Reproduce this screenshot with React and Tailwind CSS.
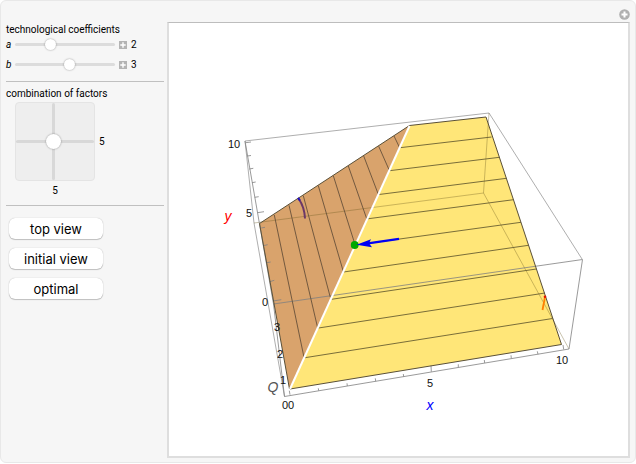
import { useState } from 'react';

const THUMB =
  '[&::-webkit-slider-thumb]:appearance-none [&::-webkit-slider-thumb]:rounded-full [&::-webkit-slider-thumb]:bg-white [&::-webkit-slider-thumb]:shadow-[0_0_2px_rgba(0,0,0,0.4)]';

// [x1, y1, x2, y2]
const BACK_EDGES = [
  [245, 141, 489, 113],
  [489, 113, 582, 259],
  [245, 141, 254, 223],
  [254, 223, 284.5, 396.5],
  [254, 223, 483.5, 193],
  [489, 113, 483.5, 193],
  [483.5, 193, 569, 349],
];

const FRONT_EDGES = [
  [245, 141, 273.5, 304],
  [273.5, 304, 582.5, 259.5],
  [582.5, 259.5, 569, 349],
  [273.5, 304, 284.5, 396.5],
  [284.5, 396.5, 569, 349],
];

const BROWN_LEVELS = [
  [394, 136, 399.3, 147],
  [378.7, 146.3, 389.3, 170.3],
  [363.7, 156, 378.3, 194.3],
  [348.3, 166, 366.7, 218.7],
  [333.3, 175.7, 354.7, 243.5],
  [318.3, 185.7, 343.3, 271.5],
  [303.3, 195.7, 330.3, 297.3],
  [289, 205.3, 317.7, 328],
  [274.3, 215, 304, 357.3],
];

const YELLOW_LEVELS = [
  [400, 147.7, 491.5, 137],
  [389.5, 170.7, 499.5, 157.3],
  [379, 194.5, 506.5, 178.3],
  [367.7, 218.8, 513.5, 199.7],
  [356, 245, 521, 222.3],
  [343.5, 272, 528.5, 245.3],
  [331.5, 299.3, 536.3, 269],
  [318.5, 328, 545, 293],
  [305, 357.7, 552.5, 318.5],
];

const TICKS = [
  [245.7, 142.7, 251, 142],
  [247.3, 156, 251, 155.5],
  [249.3, 169, 253.3, 168.3],
  [252, 182.7, 255.7, 182],
  [254.7, 197.3, 258.7, 196.7],
  [257.5, 212.7, 264, 211.7],
  [261.3, 228, 265, 227.3],
  [264, 245.5, 267.7, 244.7],
  [266.7, 262.7, 270.7, 262],
  [269.7, 281.7, 274.3, 280.3],
  [273, 301, 281.3, 299.7],
  [290, 394.7, 289.3, 390.7],
  [318.7, 390.7, 318.3, 388.3],
  [347.3, 386, 347, 383.3],
  [375.7, 381.3, 375.3, 378.3],
  [403.7, 376.7, 403.3, 374],
  [431.3, 371.7, 431, 365.7],
  [458.3, 367.3, 458.3, 364.3],
  [484.7, 363, 484.3, 360],
  [511.3, 358.3, 511, 355.3],
  [538, 354.3, 537.3, 351.3],
  [563.7, 349.3, 563, 345],
];

function Lines({ data, ...props }) {
  return (
    <g {...props}>
      {data.map(([x1, y1, x2, y2]) => (
        <line key={`${x1}-${y1}-${x2}`} x1={x1} y1={y1} x2={x2} y2={y2} />
      ))}
    </g>
  );
}

function SurfacePlot() {
  return (
    <svg viewBox="169 23 459 433" className="block h-auto w-full" role="img" aria-label="production surface">
      {/* surfaces */}
      <polygon points="259.5,223.5 409.5,125.5 289.5,389" fill="#d9a36c" />
      <polygon points="409.5,125.5 486,117 561.5,344.5 290,389" fill="#ffe678" />

      {/* box edges, the far ones shine through the surface */}
      <g strokeWidth="0.8" fill="none">
        <Lines data={BACK_EDGES.slice(0, 4)} stroke="#999" />
        <Lines data={BACK_EDGES.slice(4)} stroke="#6b5a20" strokeOpacity="0.45" />
        <Lines data={FRONT_EDGES} stroke="#808080" />
        <Lines data={TICKS} stroke="#808080" />
      </g>

      {/* level lines */}
      <Lines data={BROWN_LEVELS} stroke="#66503a" strokeWidth="0.9" />
      <Lines data={YELLOW_LEVELS} stroke="#6a6032" strokeWidth="0.9" />
      <g fill="none" stroke="#5a5038" strokeWidth="1">
        <polyline points="289.5,389 259.5,223.5 409.5,125.5" />
        <polyline points="409.5,125.5 486,117 561.5,344.5 290,389" />
      </g>
      <line x1="409.5" y1="126" x2="290" y2="389" stroke="#fff" strokeWidth="2" />

      {/* expansion marks */}
      <path d="M298.5 198.5Q304.5 207 305 218.5" fill="none" stroke="#6b3868" strokeWidth="2" />
      <path d="M298 197.8L300 200.5" stroke="#2010c0" strokeWidth="2" />
      <line x1="545" y1="297" x2="542.5" y2="310" stroke="#ff8000" strokeWidth="1.8" />
      <circle cx="545" cy="296.7" r="1.3" fill="#e01000" />

      {/* chosen point */}
      <circle cx="354.7" cy="245" r="3.9" fill="#00a800" />
      <line x1="399" y1="238.8" x2="368" y2="243.3" stroke="#0000f5" strokeWidth="2.2" />
      <polygon points="356.5,244.8 371,239.3 369,243.3 372,247.2" fill="#0000f5" />

      <g className="font-['Liberation_Sans',sans-serif] text-[11px]" fill="#111" textAnchor="middle">
        <text x="234" y="148">10</text>
        <text x="249" y="217">5</text>
        <text x="265" y="306">0</text>
        <text x="277" y="331">3</text>
        <text x="280" y="358">2</text>
        <text x="283" y="384">1</text>
        <text x="288" y="409">00</text>
        <text x="430" y="387">5</text>
        <text x="562" y="364">10</text>
      </g>
      <g className="font-['Liberation_Sans',sans-serif] text-[14px]" textAnchor="middle">
        <text x="228" y="221" fill="#f00" fontStyle="italic">y</text>
        <text x="430" y="410" fill="#00f" fontStyle="italic">x</text>
        <text x="273" y="392" fill="#555" fontStyle="italic">Q</text>
      </g>
    </svg>
  );
}

function CoefficientSlider({ id, value, onChange }) {
  return (
    <div className="flex h-[18px] items-center">
      <label htmlFor={id} className="w-[9px] italic">{id}</label>
      <input
        id={id}
        type="range"
        min="0.4"
        max="5.1"
        step="0.1"
        value={value}
        onChange={(e) => onChange(Number(e.target.value))}
        className={`h-3 w-[100px] appearance-none bg-transparent [&::-webkit-slider-runnable-track]:h-[3px] [&::-webkit-slider-runnable-track]:rounded-full [&::-webkit-slider-runnable-track]:bg-[#dcdcdc] [&::-webkit-slider-thumb]:-mt-1 [&::-webkit-slider-thumb]:size-[11px] ${THUMB}`}
      />
      <button type="button" aria-label={`more controls for ${id}`} className="mt-0.5 ml-1 size-2 bg-[#b4b4b4]">
        <svg viewBox="0 0 8 8" className="size-2" stroke="#fff" strokeWidth="1.4">
          <path d="M4 1.3V6.7M1.3 4H6.7" />
        </svg>
      </button>
      <output htmlFor={id} className="ml-1">{value}</output>
    </div>
  );
}

function FactorPad({ x, y, onX, onY }) {
  return (
    <div className="ml-[9px] grid w-max grid-cols-[80px_auto] items-center gap-x-1 gap-y-1">
      <div className="grid h-[79px] items-center rounded border border-[#e4e4e4] bg-[#eee]">
        <input
          type="range"
          aria-label="second factor"
          min="0"
          max="10"
          value={y}
          onChange={(e) => onY(Number(e.target.value))}
          className="ml-[30px] h-[77px] w-[15px] appearance-none bg-transparent [direction:rtl] [grid-area:1/1] [writing-mode:vertical-lr] [&::-webkit-slider-runnable-track]:w-[3px] [&::-webkit-slider-runnable-track]:rounded-full [&::-webkit-slider-runnable-track]:bg-[#d8d8d8] [&::-webkit-slider-thumb]:size-[3px] [&::-webkit-slider-thumb]:appearance-none"
        />
        <input
          type="range"
          aria-label="first factor"
          min="0"
          max="10.5"
          step="0.5"
          value={x}
          onChange={(e) => onX(Number(e.target.value))}
          className={`h-[15px] w-[78px] appearance-none bg-transparent [grid-area:1/1] [&::-webkit-slider-runnable-track]:h-[3px] [&::-webkit-slider-runnable-track]:rounded-full [&::-webkit-slider-runnable-track]:bg-[#d8d8d8] [&::-webkit-slider-thumb]:-mt-1.5 [&::-webkit-slider-thumb]:size-[15px] ${THUMB}`}
        />
      </div>
      <output>{y}</output>
      <output className="text-center leading-3">{x}</output>
    </div>
  );
}

function ViewButton({ children }) {
  return (
    <button
      type="button"
      className="h-[21px] w-[94px] rounded-md bg-white text-[13px] leading-5 text-black shadow-[0_0_1px_rgba(0,0,0,0.3),0_1px_1px_rgba(0,0,0,0.2)]"
    >
      {children}
    </button>
  );
}

function App() {
  const [a, setA] = useState(2);
  const [b, setB] = useState(3);
  const [x, setX] = useState(5);
  const [y, setY] = useState(5);

  return (
    <div className="rounded-md border border-[#e8e8e8] bg-[#f6f6f6] pr-[5px] pb-1 pl-[5px] font-['Inter',sans-serif] text-black">
      <header className="flex h-[21px] items-center justify-end pt-1.5">
        <button type="button" aria-label="options" className="size-[11px]">
          <svg viewBox="0 0 11 11" className="size-[11px]">
            <circle cx="5.5" cy="5.5" r="5.3" fill="#b0b0b0" />
            <path d="M5.5 2.5V8.5M2.5 5.5H8.5" stroke="#fff" strokeWidth="2" />
          </svg>
        </button>
      </header>

      <div className="flex gap-[3px]">
        <aside className="w-[158px] shrink-0 font-['Roboto',sans-serif] text-[10px] leading-[11px]">
          <section className="border-b border-[#c0c0c0] pt-0.5 pb-2">
            <h2>technological coefficients</h2>
            <div className="flex flex-col gap-0.5">
              <CoefficientSlider id="a" value={a} onChange={setA} />
              <CoefficientSlider id="b" value={b} onChange={setB} />
            </div>
          </section>

          <section className="border-b border-[#c0c0c0] pt-1.5 pb-2">
            <h2 className="mb-[3px]">combination of factors</h2>
            <FactorPad x={x} y={y} onX={setX} onY={setY} />
          </section>

          <div className="flex flex-col gap-[9px] pt-3 pl-[3px] font-['Inter',sans-serif]">
            <ViewButton>top view</ViewButton>
            <ViewButton>initial view</ViewButton>
            <ViewButton>optimal</ViewButton>
          </div>
        </aside>

        <main className="min-w-0 flex-1 border-2 border-t border-[#dedede] border-t-[#bdbdbd] bg-white">
          <SurfacePlot />
        </main>
      </div>
    </div>
  );
}

export default App;
